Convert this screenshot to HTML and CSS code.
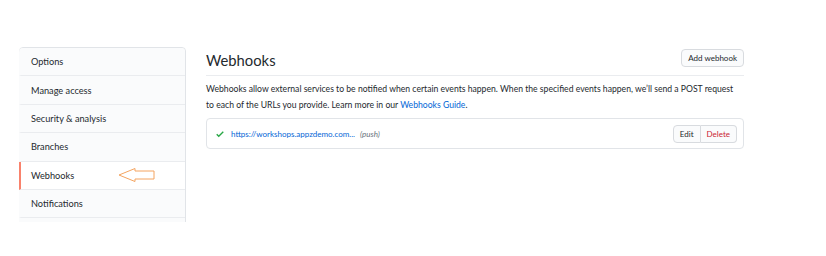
FILE: index.html
```html
<!DOCTYPE html>
<html>
<head>
<meta charset="utf-8">
<link rel="stylesheet" href="styles.css">
</head>
<body>
<div class="page">
  <nav class="menu">
    <a class="item">Options</a>
    <a class="item">Manage access</a>
    <a class="item">Security &amp; analysis</a>
    <a class="item">Branches</a>
    <a class="item selected">Webhooks
      <svg class="arrow" width="38" height="16" viewBox="0 0 38 16"><path d="M1 8 L17 1.5 L17 4 L36 4 L36 12 L17 12 L17 14.5 Z" fill="none" stroke="#f4a460" stroke-width="1"/></svg>
    </a>
    <a class="item">Notifications</a>
    <a class="item"></a>
  </nav>
  <main class="content">
    <div class="head">
      <h2 class="title">Webhooks</h2>
      <button class="btn">Add webhook</button>
    </div>
    <p class="desc">Webhooks allow external services to be notified when certain events happen. When the specified events happen, we’ll send a POST request to each of the URLs you provide. Learn more in our <span class="link">Webhooks Guide</span>.</p>
    <div class="hook">
      <svg class="check" width="10" height="10" viewBox="0 0 12 16"><path d="M12 5l-8 8-4-4 1.5-1.5L4 10l6.5-6.5L12 5z" fill="#28a745"/></svg>
      <span class="url">https://workshops.appzdemo.com...</span>
      <span class="ev">(push)</span>
      <div class="group"><button class="gbtn">Edit</button><button class="gbtn del">Delete</button></div>
    </div>
  </main>
</div>
</body>
</html>
```
FILE: styles.css
```css
html, body { margin: 0; padding: 0; background: #fff; }
body { font-family: "Lato", "Noto Sans", sans-serif; color: #24292e; font-size: 8.7px; }
.page { display: flex; padding: 47px 0 0 19px; height: 175px; overflow: hidden; align-items: flex-start; }
.menu { width: 165px; border: 1px solid #e1e4e8; border-radius: 4px; background: #fff; display: flex; flex-direction: column; flex-shrink: 0; }
.item { box-sizing: border-box; display: flex; align-items: center; height: 28.4px; padding-left: 10px; border-bottom: 1px solid #eaecef; background: #fafbfc; color: #24292e; font-size: 9.2px; border-left: 2px solid transparent; margin-left: -1px; }
.item:first-child { border-radius: 4px 4px 0 0; }
.item.selected { background: #fff; border-left-color: #f9826c; }
.arrow { margin-left: 44px; }
.content { margin-left: 20px; width: 538px; }
.head { display: flex; justify-content: space-between; align-items: center; height: 28px; border-bottom: 1px solid #eaecef; }
.title { margin: 0; font-weight: 400; font-size: 14.8px; line-height: 24px; padding-bottom: 3px; }
.btn { font-family: inherit; font-size: 8px; color: #24292e; background: #fafbfc; border: 1px solid #d8dbdf; border-radius: 4px; height: 18px; padding: 0 6px; margin-bottom: 7px; }
.desc { margin: 5px 0 0; max-width: 528px; line-height: 16px; font-size: 8.65px; }
.link, .url { color: #0366d6; }
.hook { margin-top: 5px; border: 1px solid #e1e4e8; border-radius: 4px; height: 29px; display: flex; align-items: center; padding: 0 6px 0 8px; font-size: 8px; }
.check { margin-right: 6px; }
.ev { color: #6a737d; font-style: italic; margin-left: 5px; }
.group { margin-left: auto; display: flex; }
.gbtn { font-family: inherit; font-size: 8px; color: #24292e; background: #fafbfc; border: 1px solid #d8dbdf; height: 18px; padding: 0 6px; }
.gbtn:first-child { border-radius: 4px 0 0 4px; }
.gbtn.del { color: #cb2431; border-left: 0; border-radius: 0 4px 4px 0; }
```
